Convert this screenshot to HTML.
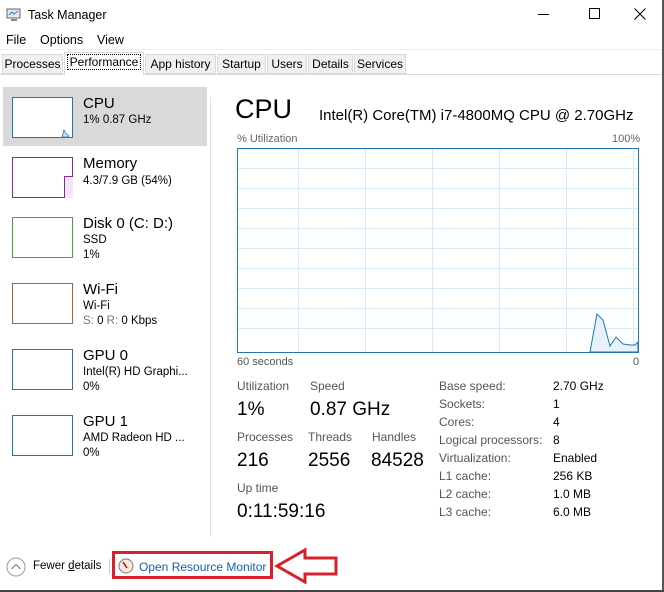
<!DOCTYPE html><html><head><style>
*{margin:0;padding:0;box-sizing:border-box}
body{width:664px;height:592px;background:#fff;font-family:"Liberation Sans",sans-serif;position:relative;overflow:hidden;color:#000}
.a{position:absolute;white-space:nowrap}
.tab{position:absolute;top:54px;height:20px;border:1px solid #d9d9d9;background:#f0f0f0;font-size:12px;line-height:18px;text-align:center}
.th{position:absolute;left:12px;width:61px;height:41px;background:#fff}
.nm{font-size:15px}
.sb{font-size:11.5px}
.lb{font-size:12px;color:#555}
.vl{font-size:19px}
.rk{font-size:12px;color:#555}
.rv{font-size:12px}
</style></head><body>
<svg class="a" style="left:6px;top:7px" width="16" height="16"><rect x="1" y="2" width="13" height="9" fill="#dfe9f3" stroke="#666"/><polyline points="3,8 6,5 8,7 12,4" fill="none" stroke="#2a7fbf"/><rect x="5" y="12" width="6" height="2" fill="#888"/></svg>
<div class="a" style="left:28px;top:8px;font-size:12.5px">Task Manager</div>
<div class="a" style="left:538px;top:14px;width:11px;height:1px;background:#000"></div>
<div class="a" style="left:589px;top:8px;width:11px;height:11px;border:1px solid #000"></div>
<svg class="a" style="left:634px;top:8px" width="12" height="12"><path d="M0.5 0.5L11.5 11.5M11.5 0.5L0.5 11.5" stroke="#000"/></svg>
<div class="a" style="left:6px;top:33px;font-size:12.5px">File&nbsp;&nbsp;&nbsp; Options&nbsp;&nbsp;&nbsp; View</div>
<div class="a" style="left:0;top:49px;width:662px;height:1px;background:#eee"></div>
<div class="a" style="left:0;top:74px;width:662px;height:1px;background:#d9d9d9"></div>
<div class="tab" style="left:2px;width:61px">Processes</div>
<div class="tab" style="left:64px;width:80px;top:52px;height:23px;background:#fff;border-bottom:none"><span style="border:1px dotted #000;padding:0 2px">Performance</span></div>
<div class="tab" style="left:145px;width:71px">App history</div>
<div class="tab" style="left:217px;width:49px">Startup</div>
<div class="tab" style="left:267px;width:40px">Users</div>
<div class="tab" style="left:308px;width:45px">Details</div>
<div class="tab" style="left:354px;width:52px">Services</div>
<div class="a" style="left:662px;top:0;width:2px;height:592px;background:#555"></div>
<div class="a" style="left:3px;top:87px;width:204px;height:59px;background:#d9d9d9"></div>
<div class="a" style="left:210px;top:97px;width:1px;height:440px;background:#e0e0e0"></div>
<div class="th" style="top:97px;border:1px solid #1e77b7"><svg width="59" height="39" class="a" style="left:0;top:0"><path d="M49 39L51 32L53 36L55 37L56 39Z" fill="#d6e6f3" stroke="#1e77b7" stroke-width="0.8"/></svg></div>
<div class="a nm" style="left:83px;top:95px">CPU</div><div class="a sb" style="left:83px;top:114px">1% 0.87 GHz</div>
<div class="th" style="top:157px;border:1px solid #8b23a5"><div class="a" style="left:51px;top:18px;width:9px;height:22px;background:#f1e8f4;border-left:1px solid #8b23a5;border-top:1px solid #8b23a5"></div></div>
<div class="a nm" style="left:83px;top:155px">Memory</div><div class="a sb" style="left:83px;top:175px">4.3/7.9 GB (54%)</div>
<div class="th" style="top:217px;border:1px solid #4da42a"></div>
<div class="a nm" style="left:83px;top:215px">Disk 0 (C: D:)</div><div class="a sb" style="left:83px;top:234px">SSD</div><div class="a sb" style="left:83px;top:249px">1%</div>
<div class="th" style="top:283px;border:1px solid #a8662c"></div>
<div class="a nm" style="left:83px;top:281px">Wi-Fi</div><div class="a sb" style="left:83px;top:300px">Wi-Fi</div><div class="a sb" style="left:83px;top:315px"><span style="color:#777">S:</span> 0 <span style="color:#777">R:</span> 0 Kbps</div>
<div class="th" style="top:349px;border:1px solid #1e77b7"></div>
<div class="a nm" style="left:83px;top:347px">GPU 0</div><div class="a sb" style="left:83px;top:366px">Intel(R) HD Graphi...</div><div class="a sb" style="left:83px;top:381px">0%</div>
<div class="th" style="top:415px;border:1px solid #1e77b7"></div>
<div class="a nm" style="left:83px;top:413px">GPU 1</div><div class="a sb" style="left:83px;top:432px">AMD Radeon HD ...</div><div class="a sb" style="left:83px;top:447px">0%</div>
<div class="a" style="left:235px;top:94px;font-size:27px">CPU</div>
<div class="a" style="left:319px;top:107px;font-size:15px">Intel(R) Core(TM) i7-4800MQ CPU @ 2.70GHz</div>
<div class="a" style="left:237px;top:133px;font-size:11px;color:#666">% Utilization</div>
<div class="a" style="left:612px;top:133px;font-size:11px;color:#666">100%</div>
<svg class="a" style="left:237px;top:148px" width="402" height="205">
<g stroke="#d9eaf7" stroke-width="1">
<path d="M0 20.5H402M0 40.5H402M0 60.5H402M0 80.5H402M0 100.5H402M0 120.5H402M0 140.5H402M0 160.5H402M0 180.5H402"/>
<path d="M61.5 0V205M128.5 0V205M195.5 0V205M262.5 0V205M329.5 0V205M396.5 0V205"/></g>
<path d="M353 204L360 166L366 172L373 198L379 189L386 196L393 197L398 197L401 194L401 204Z" fill="#e8f1f9" stroke="#1e77b7" stroke-width="1"/>
<rect x="0.5" y="0.5" width="401" height="204" fill="none" stroke="#1e77b7"/>
</svg>
<div class="a" style="left:237px;top:356px;font-size:11px;color:#555">60 seconds</div>
<div class="a" style="left:633px;top:356px;font-size:11px;color:#555">0</div>
<div class="a lb" style="left:237px;top:379px">Utilization</div><div class="a lb" style="left:310px;top:379px">Speed</div>
<div class="a vl" style="left:237px;top:399px">1%</div><div class="a vl" style="left:310px;top:399px">0.87 GHz</div>
<div class="a lb" style="left:237px;top:430px">Processes</div><div class="a lb" style="left:308px;top:430px">Threads</div><div class="a lb" style="left:372px;top:430px">Handles</div>
<div class="a vl" style="left:237px;top:450px">216</div><div class="a vl" style="left:308px;top:450px">2556</div><div class="a vl" style="left:371px;top:450px">84528</div>
<div class="a lb" style="left:237px;top:481px">Up time</div>
<div class="a vl" style="left:237px;top:501px">0:11:59:16</div>
<div class="a rk" style="left:439px;top:379px">Base speed:</div><div class="a rv" style="left:553px;top:379px">2.70 GHz</div>
<div class="a rk" style="left:439px;top:397px">Sockets:</div><div class="a rv" style="left:553px;top:397px">1</div>
<div class="a rk" style="left:439px;top:415px">Cores:</div><div class="a rv" style="left:553px;top:415px">4</div>
<div class="a rk" style="left:439px;top:433px">Logical processors:</div><div class="a rv" style="left:553px;top:433px">8</div>
<div class="a rk" style="left:439px;top:451px">Virtualization:</div><div class="a rv" style="left:553px;top:451px">Enabled</div>
<div class="a rk" style="left:439px;top:469px">L1 cache:</div><div class="a rv" style="left:553px;top:469px">256 KB</div>
<div class="a rk" style="left:439px;top:487px">L2 cache:</div><div class="a rv" style="left:553px;top:487px">1.0 MB</div>
<div class="a rk" style="left:439px;top:505px">L3 cache:</div><div class="a rv" style="left:553px;top:505px">6.0 MB</div>
<svg class="a" style="left:6px;top:557px" width="20" height="20"><circle cx="10" cy="10" r="9" fill="none" stroke="#999"/><path d="M5.5 12L10 7.5L14.5 12" fill="none" stroke="#777"/></svg>
<div class="a" style="left:33px;top:560px;font-size:11.5px">Fewer <u>d</u>etails</div>
<div class="a" style="left:109px;top:559px;width:1px;height:15px;background:#ccc"></div>
<div class="a" style="left:112px;top:551px;width:161px;height:28px;border:3px solid #d7202a"></div>
<svg class="a" style="left:118px;top:558px" width="16" height="16"><circle cx="8" cy="8" r="7" fill="#f3ebe0" stroke="#777"/><path d="M5 4L9 10" stroke="#c00" stroke-width="1.5"/></svg>
<div class="a" style="left:139px;top:560px;font-size:12px;color:#1a5fb4">Open Resource Monitor</div>
<svg class="a" style="left:274px;top:547px" width="66" height="37"><path d="M3 19L31 3V11H62V27H31V35Z" fill="#fff" stroke="#d7202a" stroke-width="3" stroke-linejoin="miter"/></svg>
<div class="a" style="left:0;top:590px;width:664px;height:2px;background:#444"></div>
</body></html>
